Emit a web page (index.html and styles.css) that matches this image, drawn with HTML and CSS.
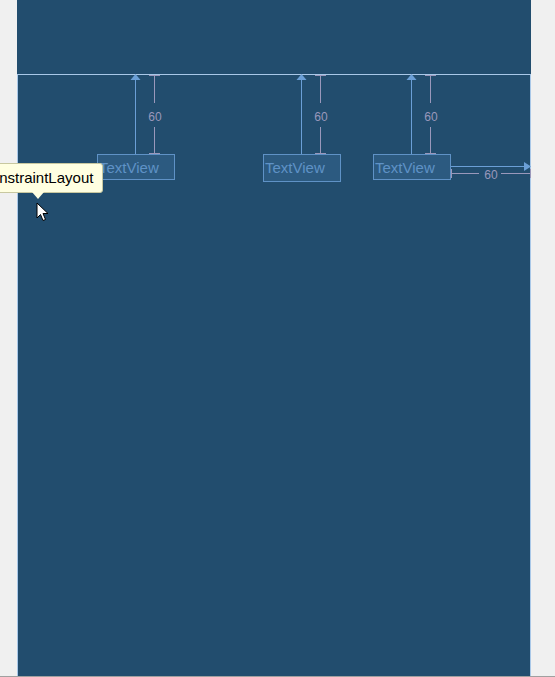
FILE: index.html
```html
<!DOCTYPE html>
<html lang="en">
<head>
  <meta charset="UTF-8" />
  <meta name="viewport" content="width=device-width, initial-scale=1.0" />
  <title>Blueprint - ConstraintLayout</title>
  <link rel="stylesheet" href="styles.css">
</head>
<body>
  <div class="editor">
    <div class="blueprint">
      <div class="layout"></div>

      <svg class="constraints" width="514" height="676" viewBox="0 0 514 676">
        <!-- top anchors -->
        <g class="anchor">
          <line x1="118.5" y1="154" x2="118.5" y2="79" />
          <polygon points="118.5,74 113.5,80 123.5,80" />
          <line x1="284.5" y1="154" x2="284.5" y2="79" />
          <polygon points="284.5,74 279.5,80 289.5,80" />
          <line x1="394.5" y1="154" x2="394.5" y2="79" />
          <polygon points="394.5,74 389.5,80 399.5,80" />
          <line x1="434" y1="166.5" x2="508" y2="166.5" />
          <polygon points="514,166.5 507,162 507,171" />
        </g>
        <!-- margins -->
        <g class="dimension">
          <line x1="137.5" y1="75" x2="137.5" y2="103" />
          <line x1="137.5" y1="127" x2="137.5" y2="154" />
          <line x1="132" y1="75.5" x2="143" y2="75.5" />
          <line x1="132" y1="153.5" x2="143" y2="153.5" />

          <line x1="303.5" y1="75" x2="303.5" y2="103" />
          <line x1="303.5" y1="127" x2="303.5" y2="154" />
          <line x1="298" y1="75.5" x2="309" y2="75.5" />
          <line x1="298" y1="153.5" x2="309" y2="153.5" />

          <line x1="413.5" y1="75" x2="413.5" y2="103" />
          <line x1="413.5" y1="127" x2="413.5" y2="154" />
          <line x1="408" y1="75.5" x2="419" y2="75.5" />
          <line x1="408" y1="153.5" x2="419" y2="153.5" />

          <line x1="434" y1="173.5" x2="462" y2="173.5" />
          <line x1="484" y1="173.5" x2="514" y2="173.5" />
          <line x1="434.5" y1="169" x2="434.5" y2="178" />
          <line x1="513.5" y1="169" x2="513.5" y2="178" />
        </g>
      </svg>

      <span class="margin-label" style="left: 130px; top: 110px;">60</span>
      <span class="margin-label" style="left: 296px; top: 110px;">60</span>
      <span class="margin-label" style="left: 406px; top: 110px;">60</span>
      <span class="margin-label" style="left: 466px; top: 168px;">60</span>

      <div class="text-view" style="left: 80px; top: 154px;">TextView</div>
      <div class="text-view tall" style="left: 246px; top: 154px;">TextView</div>
      <div class="text-view" style="left: 356px; top: 154px;">TextView</div>
    </div>

    <div class="tooltip">ConstraintLayout</div>

    <svg class="cursor" width="14" height="22" viewBox="0 0 14 22">
      <path d="M1 1 L1 16 L4.5 12.5 L7 18.5 L9.5 17.5 L7 11.5 L12 11.5 Z" />
    </svg>
  </div>
</body>
</html>
```

FILE: styles.css
```css
body {
  margin: 0;
  font-family: "Liberation Sans", Arial, sans-serif;
  background-color: #f0f0f0;
  overflow: hidden;
}

.editor {
  position: relative;
  width: 555px;
  height: 676px;
  border-bottom: 1px solid #a0a0a0;
  overflow: hidden;
}

.blueprint {
  position: relative;
  margin-left: 17px;
  width: 514px;
  height: 676px;
  background-color: #224d6e;
}

.layout {
  position: absolute;
  top: 74px;
  left: 0;
  right: 0;
  bottom: 0;
  border: 1px solid #a9c8e8;
  border-bottom: none;
}

.constraints {
  position: absolute;
  top: 0;
  left: 0;
}

.anchor line {
  stroke: #6b9fd6;
  stroke-width: 1;
}

.anchor polygon {
  fill: #6b9fd6;
}

.dimension line {
  stroke: #9a98bb;
  stroke-width: 1;
}

.margin-label {
  position: absolute;
  width: 16px;
  text-align: center;
  font-size: 12px;
  line-height: 14px;
  color: #9a98bb;
}

.text-view {
  position: absolute;
  box-sizing: border-box;
  width: 78px;
  height: 26px;
  padding-left: 1px;
  border: 1px solid #5f92c6;
  background-color: #2c5a80;
  color: #5f92c6;
  font-size: 15px;
  line-height: 26px;
  white-space: nowrap;
}

.text-view.tall {
  height: 28px;
}

/* the hint runs past the left edge of the window */
.tooltip {
  position: absolute;
  left: -25px;
  top: 163px;
  height: 30px;
  box-sizing: border-box;
  padding: 0 9px 0 4px;
  border: 1px solid #c8c8a0;
  border-radius: 3px;
  background-color: #ffffe1;
  font-size: 15px;
  line-height: 28px;
  color: #000;
  white-space: nowrap;
}

.tooltip::after {
  content: "";
  position: absolute;
  left: 56px;
  bottom: -7px;
  border-left: 6px solid transparent;
  border-right: 6px solid transparent;
  border-top: 7px solid #ffffe1;
}

.cursor {
  position: absolute;
  left: 36px;
  top: 202px;
}

.cursor path {
  fill: #fff;
  stroke: #000;
  stroke-width: 1;
  stroke-linejoin: round;
}
```
